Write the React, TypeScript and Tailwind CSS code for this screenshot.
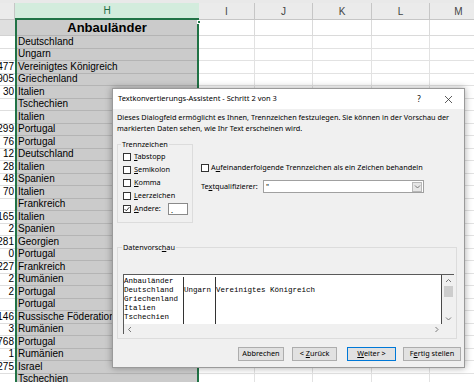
import React from "react";

const rows: [string, string][] = [
  ["", "Deutschland"],
  ["", "Ungarn"],
  ["477", "Vereinigtes Königreich"],
  ["905", "Griechenland"],
  ["30", "Italien"],
  ["", "Tschechien"],
  ["", "Italien"],
  ["299", "Portugal"],
  ["76", "Portugal"],
  ["12", "Deutschland"],
  ["28", "Italien"],
  ["48", "Spanien"],
  ["70", "Italien"],
  ["", "Frankreich"],
  ["165", "Italien"],
  ["2", "Spanien"],
  ["281", "Georgien"],
  ["0", "Portugal"],
  ["227", "Frankreich"],
  ["2", "Rumänien"],
  ["2", "Portugal"],
  ["", "Portugal"],
  ["146", "Russische Föderation"],
  ["3", "Rumänien"],
  ["768", "Portugal"],
  ["1", "Rumänien"],
  ["275", "Israel"],
  ["", "Tschechien"],
];

const otherCols = [
  { label: "I", cls: "w-[56px]" },
  { label: "J", cls: "w-[58px]" },
  { label: "K", cls: "w-[59px]" },
  { label: "L", cls: "w-[58px]" },
  { label: "M", cls: "w-[58px]" },
];

function Sheet() {
  return (
    <div className="flex flex-col font-['Liberation_Sans',Arial,sans-serif] text-black">
      <div className="h-[3px] bg-[#e9e9e9]" />
      <div className="flex">
        {/* G */}
        <div className="w-[15px] shrink-0 flex flex-col">
          <div className="h-[17px] bg-[#ebebeb] border-b border-r border-[#c6c6c6]" />
          <div className="h-[16px] bg-[#dfdfdf] border-b border-[#d2d2d2]" />
          {rows.map((r, i) => (
            <div
              key={i}
              className="h-[12.5px] border-b border-[#dedede] flex justify-end items-center overflow-hidden text-[10px] leading-none whitespace-nowrap pr-[1px]"
            >
              {r[0]}
            </div>
          ))}
        </div>
        {/* H */}
        <div className="w-[184px] shrink-0 flex flex-col relative">
          <div className="h-[17px] bg-[#d3ecdd] border-b-2 border-[#217346] flex items-center justify-center text-[10px] text-[#1e6b41]">
            H
          </div>
          <div className="flex flex-col border-x-2 border-[#217346] bg-[#cbcbcb]">
            <div className="h-[16px] border-b border-[#b4b4b4] flex items-center justify-center text-[13px] font-bold leading-none">
              Anbauländer
            </div>
            {rows.map((r, i) => (
              <div
                key={i}
                className="h-[12.5px] border-b border-[#b4b4b4] flex items-center pl-[1px] text-[10px] leading-none whitespace-nowrap overflow-hidden"
              >
                {r[1]}
              </div>
            ))}
          </div>
          <div className="absolute right-[-2px] top-[17px] w-[4px] h-[4px] bg-[#217346] border border-white" />
        </div>
        {otherCols.map((c) => (
          <div key={c.label} className={`${c.cls} shrink-0 flex flex-col`}>
            <div className="h-[17px] bg-[#ebebeb] border-b border-r border-[#c6c6c6] flex items-center justify-center text-[10px] text-[#444]">
              {c.label}
            </div>
            <div className="h-[16px] border-b border-r border-[#dadada]" />
            {rows.map((_, i) => (
              <div key={i} className="h-[12.5px] border-b border-r border-[#e2e2e2]" />
            ))}
          </div>
        ))}
      </div>
    </div>
  );
}

function Box({ checked }: { checked?: boolean }) {
  return (
    <span className="w-[8px] h-[8px] border border-[#333] bg-white shrink-0 flex items-center justify-center">
      {checked && (
        <svg width="6" height="6" viewBox="0 0 6 6">
          <path d="M0.6 3.1 L2.3 4.8 L5.4 1.1" fill="none" stroke="#222" strokeWidth="0.9" />
        </svg>
      )}
    </span>
  );
}

function CheckRow({ pre, u, post, checked }: { pre?: string; u: string; post: string; checked?: boolean }) {
  return (
    <div className="h-[13px] flex items-center gap-[3px]">
      <Box checked={checked} />
      <span className="whitespace-nowrap">
        {pre}
        <span className="underline">{u}</span>
        {post}
      </span>
    </div>
  );
}

function Chevron({ dir }: { dir: "up" | "down" | "left" | "right" }) {
  const d =
    dir === "up"
      ? "M1 4 L3.5 1.5 L6 4"
      : dir === "down"
      ? "M1 1.5 L3.5 4 L6 1.5"
      : dir === "left"
      ? "M4 1 L1.5 3.5 L4 6"
      : "M1.5 1 L4 3.5 L1.5 6";
  const w = dir === "up" || dir === "down" ? 7 : 5.5;
  const h = dir === "up" || dir === "down" ? 5.5 : 7;
  return (
    <svg width={w} height={h} viewBox={`0 0 ${w} ${h}`}>
      <path d={d} fill="none" stroke="#6a6a6a" strokeWidth="0.9" />
    </svg>
  );
}

function Dialog() {
  return (
    <div className="absolute left-[112px] top-[88px] w-[353px] h-[280px] flex flex-col border border-[#9a9a9a] shadow-[0_0_7px_rgba(0,0,0,0.35)] font-['Noto_Sans',sans-serif] text-[7.3px] text-black">
      {/* title bar */}
      <div className="h-[20px] bg-white flex items-center justify-between pl-[5px] pr-[11px] shrink-0">
        <span className="whitespace-nowrap text-[7.5px]">Textkonvertierungs-Assistent - Schritt 2 von 3</span>
        <div className="flex items-center gap-[20px]">
          <span className="w-[10px] text-center text-[8px]">?</span>
          <svg width="9" height="9" viewBox="0 0 9 9">
            <path d="M1 1 L8 8 M8 1 L1 8" stroke="#333" strokeWidth="0.8" />
          </svg>
        </div>
      </div>
      {/* body */}
      <div className="flex-1 bg-[#f0f0f0] flex flex-col pl-[4px] pr-[3px] pt-[3px]">
        <p className="leading-[11px] whitespace-nowrap">
          Dieses Dialogfeld ermöglicht es Ihnen, Trennzeichen festzulegen. Sie können in der Vorschau der
          <br />
          markierten Daten sehen, wie Ihr Text erscheinen wird.
        </p>
        <div className="flex mt-[10px] h-[79px]">
          {/* Trennzeichen group */}
          <div className="relative w-[76px] h-[79px] border border-[#dcdcdc] pt-[5px] pl-[5px] flex flex-col">
            <span className="absolute left-[3px] top-[-6px] bg-[#f0f0f0] px-[1px] leading-[10px]">Trennzeichen</span>
            <CheckRow u="T" post="abstopp" />
            <CheckRow u="S" post="emikolon" />
            <CheckRow u="K" post="omma" />
            <CheckRow u="L" post="eerzeichen" />
            <div className="h-[13px] flex items-center">
              <div className="w-[45px] flex items-center gap-[3px]">
                <Box checked />
                <span>
                  <span className="underline">A</span>ndere:
                </span>
              </div>
              <div className="w-[20px] h-[12px] bg-white border border-[#8a8a8a] flex items-end pl-[2px] leading-[8px]">.</div>
            </div>
          </div>
          {/* right */}
          <div className="ml-[8px] flex flex-col pt-[17px]">
            <div className="h-[13px] flex items-center gap-[2px]">
              <Box />
              <span className="whitespace-nowrap">
                A<span className="underline">u</span>feinanderfolgende Trennzeichen als ein Zeichen behandeln
              </span>
            </div>
            <div className="mt-[6px] h-[13px] flex items-center">
              <span className="w-[62px] whitespace-nowrap">
                Te<span className="underline">x</span>tqualifizierer:
              </span>
              <div className="w-[161px] h-[13px] bg-white border border-[#a0a0a0] flex items-center justify-between pl-[2px] pr-[1px]">
                <span className="leading-none">"</span>
                <div className="w-[10px] h-[10px] bg-[#e6e6e6] border border-[#b8b8b8] flex items-center justify-center">
                  <Chevron dir="down" />
                </div>
              </div>
            </div>
          </div>
        </div>
        {/* Datenvorschau */}
        <div className="relative mt-[24px] w-[340px] h-[92px] border border-[#dcdcdc] pt-[26px] pl-[5px]">
          <span className="absolute left-[4px] top-[-6px] bg-[#f0f0f0] px-[1px] leading-[10px]">
            Datenvorsc<span className="underline">h</span>au
          </span>
          <div className="w-[331px] h-[60px] flex flex-col border-t border-l border-[#5a5a5a]">
            <div className="flex flex-1">
              <div className="flex-1 bg-white border-r border-[#4a4a4a] flex font-['Liberation_Mono',monospace] text-[7.5px] leading-[9px] pt-[2px]">
                <div className="w-[60px] border-r border-[#333] whitespace-nowrap overflow-hidden">
                  Anbauländer
                  <br />
                  Deutschland
                  <br />
                  Griechenland
                  <br />
                  Italien
                  <br />
                  Tschechien
                </div>
                <div className="w-[32px] border-r border-[#333] whitespace-nowrap overflow-hidden">
                  <br />
                  Ungarn
                </div>
                <div className="flex-1 whitespace-nowrap overflow-hidden">
                  <br />
                  Vereinigtes Königreich
                </div>
              </div>
              <div className="w-[12px] bg-[#f0f0f0] flex flex-col items-center pt-[3px]">
                <Chevron dir="up" />
                <div className="mt-[2px] w-[9px] h-[11px] bg-[#cdcdcd]" />
                <div className="flex-1" />
                <div className="pb-[3px]">
                  <Chevron dir="down" />
                </div>
              </div>
            </div>
            <div className="h-[10px] flex bg-[#f0f0f0]">
              <div className="flex-1 flex items-center justify-between px-[3px]">
                <Chevron dir="left" />
                <Chevron dir="right" />
              </div>
              <div className="w-[12px]" />
            </div>
          </div>
        </div>
        {/* buttons */}
        <div className="mt-[8px] h-[14px] flex justify-end">
          <button className="w-[46px] h-[14px] bg-[#e1e1e1] border border-[#adadad] leading-none">Abbrechen</button>
          <button className="ml-[8px] w-[45px] h-[14px] bg-[#e1e1e1] border border-[#adadad] leading-none">
            &lt; <span className="underline">Z</span>urück
          </button>
          <button className="ml-[10px] w-[49px] h-[14px] bg-[#e1e1e1] border border-[#0078d7] leading-none">
            <span className="underline">W</span>eiter &gt;
          </button>
          <button className="ml-[7px] w-[58px] h-[14px] bg-[#e1e1e1] border border-[#adadad] leading-none">
            F<span className="underline">e</span>rtig stellen
          </button>
        </div>
      </div>
    </div>
  );
}

export default function App() {
  return (
    <div className="relative w-[474px] h-[382px] overflow-hidden bg-white">
      <Sheet />
      <Dialog />
    </div>
  );
}
